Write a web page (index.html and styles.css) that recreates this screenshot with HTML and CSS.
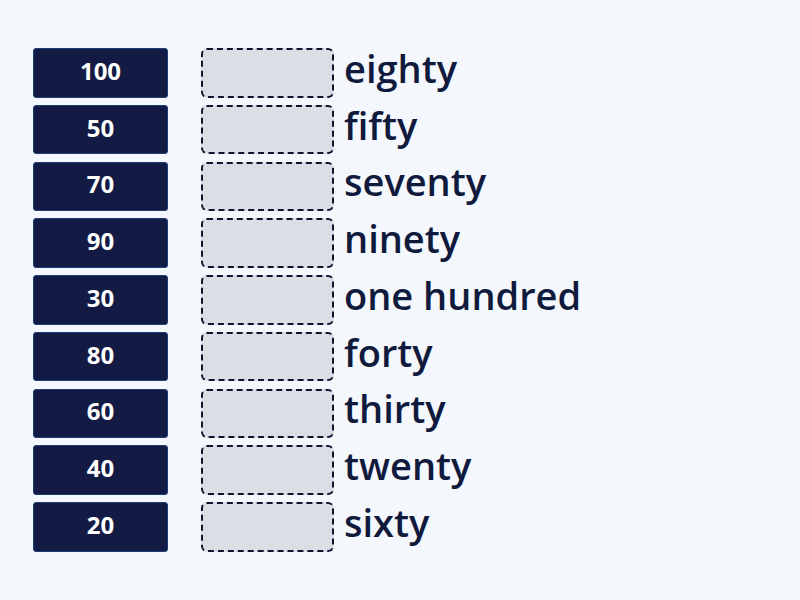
FILE: index.html
```html
<!DOCTYPE html>
<html lang="en">
<head>
<meta charset="UTF-8">
<title>Match up</title>
<link rel="stylesheet" href="styles.css">
</head>
<body>
<div class="board">
  <div class="tiles">
    <div class="tile">100</div>
    <div class="tile">50</div>
    <div class="tile">70</div>
    <div class="tile">90</div>
    <div class="tile">30</div>
    <div class="tile">80</div>
    <div class="tile">60</div>
    <div class="tile">40</div>
    <div class="tile">20</div>
  </div>
  <div class="targets">
    <div class="row"><div class="slot"></div><span class="word">eighty</span></div>
    <div class="row"><div class="slot"></div><span class="word">fifty</span></div>
    <div class="row"><div class="slot"></div><span class="word">seventy</span></div>
    <div class="row"><div class="slot"></div><span class="word">ninety</span></div>
    <div class="row"><div class="slot"></div><span class="word">one hundred</span></div>
    <div class="row"><div class="slot"></div><span class="word">forty</span></div>
    <div class="row"><div class="slot"></div><span class="word">thirty</span></div>
    <div class="row"><div class="slot"></div><span class="word">twenty</span></div>
    <div class="row"><div class="slot"></div><span class="word">sixty</span></div>
  </div>
</div>
</body>
</html>
```

FILE: styles.css
```css
html, body {
  margin: 0;
  background: #f4f7fc;
}
body {
  font-family: 'Open Sans', 'Noto Sans', sans-serif;
  width: 800px;
  height: 600px;
  overflow: hidden;
}
.board {
  display: flex;
  gap: 33px;
  padding: 48px 0 0 33px;
}
.tiles, .targets {
  display: flex;
  flex-direction: column;
  gap: 7.25px;
}
.tile {
  width: 135px;
  height: 49.5px;
  box-sizing: border-box;
  padding-bottom: 5px;
  background: #131b44;
  border: 1px solid #1d3f78;
  border-radius: 3px;
  color: #fff;
  font-weight: 700;
  font-size: 24px;
  display: flex;
  align-items: center;
  justify-content: center;
}
.row {
  display: flex;
  align-items: center;
  height: 49.5px;
  gap: 10px;
}
.slot {
  width: 133px;
  height: 49.5px;
  box-sizing: border-box;
  background: #dcdee6;
  border: 2px dashed #0e1430;
  border-radius: 6px;
}
.word {
  font-size: 38px;
  font-weight: 600;
  color: #0f1a3c;
  line-height: 1;
  margin-top: -10px;
}
```
